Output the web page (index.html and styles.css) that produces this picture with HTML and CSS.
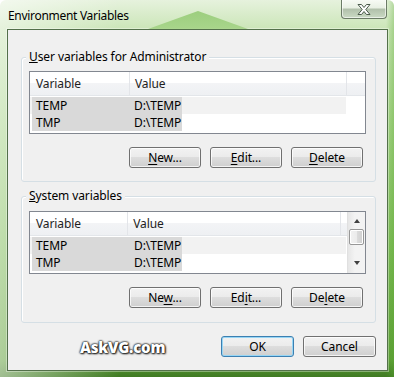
FILE: index.html
```html
<!DOCTYPE html>
<html>
<head>
<meta charset="utf-8">
<link rel="stylesheet" href="styles.css">
</head>
<body>
<div class="window">
  <div class="titlebar">
    <span class="title">Environment Variables</span>
    <div class="close">
      <svg width="20" height="13" viewBox="0 0 20 13"><path d="M4 1.5h3.5l2.5 3 2.5-3H16l-4.2 5 4.2 5h-3.5L10 8.5l-2.5 3H4l4.2-5z" fill="#fff" stroke="#4a5a4a" stroke-width="1" stroke-linejoin="round"/></svg>
    </div>
  </div>
  <div class="client">
    <section class="group">
      <div class="legend"><u>U</u>ser variables for Administrator</div>
      <div class="list">
        <div class="list-main">
          <div class="header">
            <div class="hc c1">Variable</div>
            <div class="hc c2">Value</div>
            <div class="hc fill"></div>
          </div>
          <div class="row hot">
            <div class="cell c1">TEMP</div>
            <div class="cell c2">D:\TEMP</div>
          </div>
          <div class="row">
            <div class="cell c1">TMP</div>
            <div class="cell c2">D:\TEMP</div>
          </div>
        </div>
      </div>
      <div class="buttons">
        <button class="btn"><u>N</u>ew...</button>
        <button class="btn"><u>E</u>dit...</button>
        <button class="btn"><u>D</u>elete</button>
      </div>
    </section>
    <section class="group group2">
      <div class="legend"><u>S</u>ystem variables</div>
      <div class="list">
        <div class="list-main">
          <div class="header">
            <div class="hc c1">Variable</div>
            <div class="hc c2">Value</div>
            <div class="hc fill"></div>
          </div>
          <div class="row hot">
            <div class="cell c1">TEMP</div>
            <div class="cell c2">D:\TEMP</div>
          </div>
          <div class="row">
            <div class="cell c1">TMP</div>
            <div class="cell c2">D:\TEMP</div>
          </div>
        </div>
        <div class="scrollbar">
          <div class="arrow up"></div>
          <div class="thumb"></div>
          <div class="track"></div>
          <div class="arrow down"></div>
        </div>
      </div>
      <div class="buttons">
        <button class="btn">Ne<u>w</u>...</button>
        <button class="btn">Ed<u>i</u>t...</button>
        <button class="btn">De<u>l</u>ete</button>
      </div>
    </section>
    <div class="footer">
      <span class="brand">AskVG.com</span>
      <button class="btn default">OK</button>
      <button class="btn">Cancel</button>
    </div>
  </div>
</div>
</body>
</html>
```

FILE: styles.css
```css
* { box-sizing: border-box; }
html, body { margin: 0; padding: 0; }
body {
  width: 394px;
  height: 377px;
  overflow: hidden;
  font-family: "Noto Sans", "Open Sans", sans-serif;
  font-size: 12px;
  letter-spacing: -0.1px;
  color: #000;
}
.window {
  width: 394px;
  height: 377px;
  position: relative;
  background:
    linear-gradient(90deg, rgba(255,255,255,0.5) 0px, rgba(255,255,255,0) 120px),
    linear-gradient(270deg, rgba(90,170,50,0.35) 0px, rgba(90,170,50,0) 8px),
    linear-gradient(180deg, #e6f2dd 0px, #cce6b9 28px, #a8d48a 120px, #7dba56 250px, #5c9d35 360px, #3f7a22 377px);
  border-radius: 6px 6px 0 0;
}
.titlebar {
  height: 29px;
  position: relative;
  display: flex;
  align-items: center;
}
.titlebar::before {
  content: "";
  position: absolute;
  left: 148px;
  top: 11px;
  width: 100px;
  height: 18px;
  background: linear-gradient(180deg, #8cc66a, #9fd17f);
  clip-path: polygon(50% 0, 100% 100%, 0 100%);
  opacity: 0.8;
}
.title {
  position: relative;
  margin-left: 8px;
  margin-top: 2px;
  color: #000;
  letter-spacing: -0.3px;
}
.close {
  position: absolute;
  left: 341px;
  top: -1px;
  width: 46px;
  height: 20px;
  border: 1px solid #6b7b66;
  border-top: none;
  border-radius: 0 0 4px 4px;
  background: linear-gradient(180deg, rgba(255,255,255,0.75) 0%, rgba(235,240,232,0.8) 45%, rgba(170,185,165,0.85) 55%, rgba(200,215,195,0.85) 100%);
  box-shadow: inset 0 0 0 1px rgba(255,255,255,0.6);
  display: flex;
  align-items: center;
  justify-content: center;
}
.close svg { display: block; margin-top: 1px; }

.client {
  margin-left: 7px;
  width: 381px;
  height: 342px;
  background: #f0f0f0;
  border: 1px solid #53704a;
  box-shadow: 0 0 0 1px rgba(255,255,255,0.35);
  padding: 27px 11px 0 13px;
}

.group {
  position: relative;
  width: 355px;
  border: 1px solid #d5dfe5;
  border-radius: 3px;
  padding: 13px 11px 13px 7px;
  box-shadow: inset 1px 1px 0 #fff;
}
.group2 { margin-top: 14px; padding-top: 14px; padding-bottom: 14px; }
.legend {
  position: absolute;
  left: 4px;
  top: -9px;
  padding: 0 3px;
  background: #f0f0f0;
  line-height: 16px;
}

.list {
  width: 337px;
  height: 63px;
  border: 1px solid #828790;
  background: #fff;
  display: flex;
}
.list-main { flex: 1; min-width: 0; }
.header {
  display: flex;
  height: 24px;
  background: linear-gradient(180deg, #ffffff 0, #ffffff 11px, #f3f4f6 11px, #eef0f3 100%);
  border-bottom: 1px solid #e3e6ea;
}
.hc {
  line-height: 23px;
  padding-left: 6px;
  border-right: 1px solid #e3e5e9;
  color: #1e1e1e;
}
.hc.c1 { width: 100px; }
.hc.c2 { width: 217px; padding-left: 5px; }
.hc.fill { flex: 1; border-right: none; }

.row {
  display: flex;
  height: 17px;
  line-height: 17px;
}
.header + .row { margin-top: 1px; }
.row.hot { background: #f2f2f2; width: 316px; }
.cell {
  background: #d9d9d9;
  color: #000;
}
.cell.c1 { width: 99px; padding-left: 4px; margin-left: 2px; }
.cell.c2 { width: 51px; padding-left: 3px; }

.scrollbar {
  width: 18px;
  display: flex;
  flex-direction: column;
  align-items: center;
  background: linear-gradient(90deg, #e6e6e6, #f3f3f3 40%, #f3f3f3);
  border-left: 1px solid #e0e0e0;
}
.arrow {
  width: 0;
  height: 0;
  border-left: 3.5px solid transparent;
  border-right: 3.5px solid transparent;
}
.arrow.up { border-bottom: 4px solid #404040; margin-top: 7px; }
.arrow.down { border-top: 4px solid #404040; margin-bottom: 8px; }
.thumb {
  margin-top: 6px;
  width: 15px;
  height: 16px;
  border: 1px solid #979797;
  border-radius: 2px;
  background: linear-gradient(90deg, #f2f2f2 0, #ebebeb 50%, #dcdcdc 51%, #cfcfcf 100%);
  box-shadow: inset 0 0 0 1px #fff;
}
.track { flex: 1; }

.buttons {
  display: flex;
  justify-content: flex-end;
  gap: 9px;
  margin-top: 13px;
  padding-right: 1px;
}
.btn {
  width: 72px;
  height: 21px;
  padding: 0;
  font-family: inherit;
  font-size: 12px;
  letter-spacing: -0.1px;
  color: #000;
  border: 1px solid #707070;
  border-radius: 3px;
  background: linear-gradient(180deg, #f2f2f2 0%, #ebebeb 49%, #dddddd 50%, #cfcfcf 100%);
  box-shadow: inset 0 0 0 1px rgba(255,255,255,0.75);
  line-height: 19px;
}
.btn u { text-underline-offset: 2px; }

.footer {
  display: flex;
  align-items: center;
  margin-top: 13px;
  gap: 9px;
}
.footer .btn { width: 73px; }
.footer .btn.default {
  margin-left: auto;
  border-color: #3c7fb1;
  box-shadow: inset 0 0 0 1px #97d6f5;
}
.brand {
  margin-left: 59px;
  font-family: "Open Sans", "Noto Sans", sans-serif;
  font-weight: 800;
  font-size: 15px;
  color: #fff;
  letter-spacing: -0.2px;
  text-shadow: 0 0 2px #000, 0 0 2px #000, 1px 1px 2px #333;
}
```
